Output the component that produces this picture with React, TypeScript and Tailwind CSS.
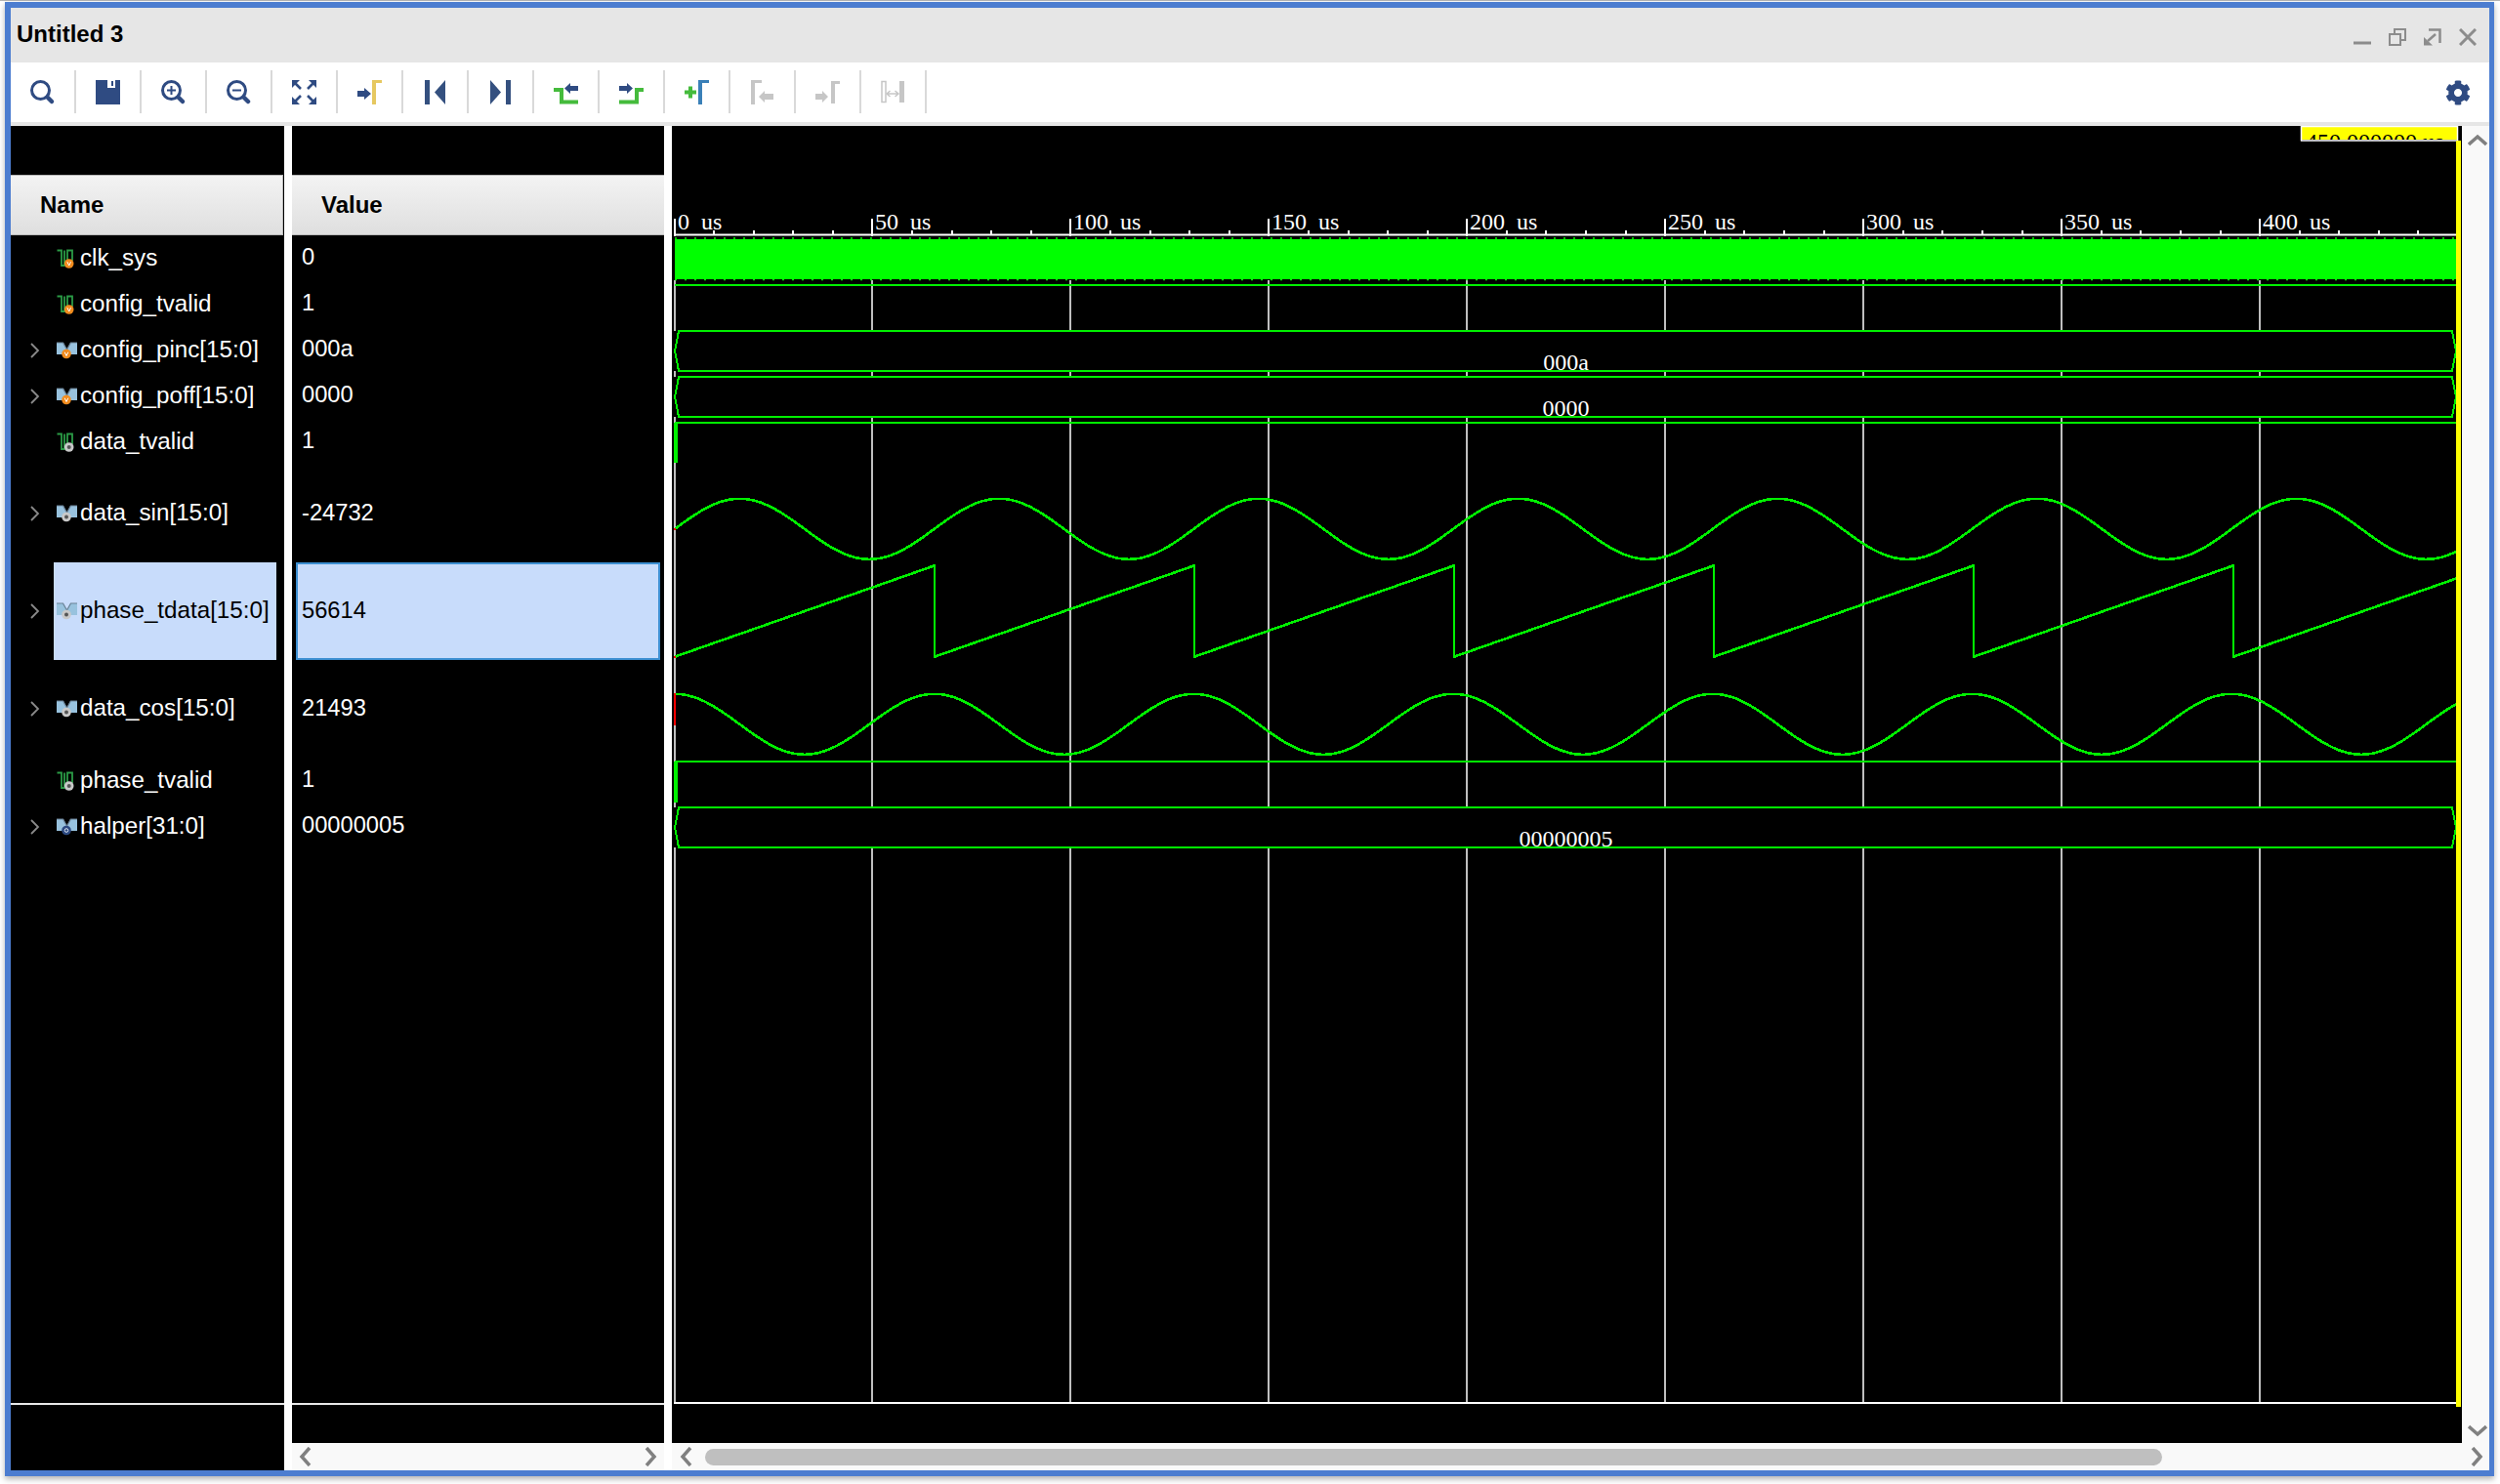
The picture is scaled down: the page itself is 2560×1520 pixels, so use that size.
import type { ReactNode } from "react";
import { FaCog } from "react-icons/fa";

const navy = "#2f4b82";
const green = "#45bb3c";
const off = "#c6c6c6";

type Dot = "v" | "o" | "c";

interface Signal {
  name: string;
  value: string;
  kind: "bit" | "bus";
  dot: Dot;
  h: string;
  selected?: boolean;
}

const signals: Signal[] = [
  { name: "clk_sys", value: "0", kind: "bit", dot: "v", h: "h-[47px]" },
  { name: "config_tvalid", value: "1", kind: "bit", dot: "v", h: "h-[47px]" },
  { name: "config_pinc[15:0]", value: "000a", kind: "bus", dot: "v", h: "h-[47px]" },
  { name: "config_poff[15:0]", value: "0000", kind: "bus", dot: "v", h: "h-[47px]" },
  { name: "data_tvalid", value: "1", kind: "bit", dot: "o", h: "h-[47px]" },
  { name: "data_sin[15:0]", value: "-24732", kind: "bus", dot: "o", h: "h-[100px]" },
  { name: "phase_tdata[15:0]", value: "56614", kind: "bus", dot: "o", h: "h-[100px]", selected: true },
  { name: "data_cos[15:0]", value: "21493", kind: "bus", dot: "o", h: "h-[100px]" },
  { name: "phase_tvalid", value: "1", kind: "bit", dot: "o", h: "h-[47px]" },
  { name: "halper[31:0]", value: "00000005", kind: "bus", dot: "c", h: "h-[47px]" },
];

function Lens({ sign }: { sign?: "+" | "-" }) {
  return (
    <svg width="30" height="30" viewBox="0 0 30 30">
      <circle cx="12.500" cy="13.500" r="9" fill="none" stroke={navy} strokeWidth="3" />
      <path d="M20 21l4 4" stroke={navy} strokeWidth="4.500" strokeLinecap="round" />
      {sign && <path d="M8 13.500h9" stroke={navy} strokeWidth="2" />}
      {sign === "+" && <path d="M12.500 9v9" stroke={navy} strokeWidth="2" />}
    </svg>
  );
}

function Icon({ children }: { children: ReactNode }) {
  return (
    <svg width="30" height="30" viewBox="0 0 30 30">
      {children}
    </svg>
  );
}

const toolbar: ReactNode[] = [
  <Lens key="find" />,
  <Icon key="save">
    <path d="M2 3h25v25H2z" fill={navy} />
    <path d="M14 3h8v8h-8z" fill="#fff" />
    <path d="M18 4h2v5h-2z" fill={navy} />
  </Icon>,
  <Lens key="in" sign="+" />,
  <Lens key="out" sign="-" />,
  <Icon key="fit">
    <g fill={navy}>
      <path d="M2 3h8l-8 8zM27 3h-8l8 8zM2 28h8l-8-8zM27 28h-8l8-8z" />
    </g>
    <path d="M5 6l6 6M24 6l-6 6M5 25l6-6M24 25l-6-6" stroke={navy} strokeWidth="2.600" />
  </Icon>,
  <Icon key="marker">
    <path d="M2 14h7v-3l7 6-7 6v-3H2z" fill={navy} />
    <path d="M17 3h10v3h-6v22h-4z" fill="#e6c860" />
  </Icon>,
  <Icon key="start">
    <path d="M4 3h5v25H4z" fill="#34507f" />
    <path d="M25 3L14 15.500 25 28z" fill="#34507f" />
  </Icon>,
  <Icon key="end">
    <path d="M4 3l11 12.500L4 28z" fill="#34507f" />
    <path d="M20 3h5v25h-5z" fill="#34507f" />
  </Icon>,
  <Icon key="prev">
    <path d="M2 13h8v12.500h17" fill="none" stroke={green} strokeWidth="4" />
    <path d="M13 11.500L19 6v3h8v5h-8v3z" fill={navy} />
  </Icon>,
  <Icon key="next">
    <path d="M2 25.500h18V13h7" fill="none" stroke={green} strokeWidth="4" />
    <path d="M2 9h8V6l6 5.500-6 5.500v-3H2z" fill={navy} />
  </Icon>,
  <Icon key="add">
    <path d="M2 15.500h12M8 9.500v12" stroke={green} strokeWidth="4" />
    <path d="M16 3h11v3h-7v22h-4z" fill="#3a80b8" />
  </Icon>,
  <Icon key="prevm">
    <path d="M3 3h11v3H7v22H3z" fill={off} />
    <path d="M11 20l6-6v3h9v6h-9v3z" fill={off} />
  </Icon>,
  <Icon key="nextm">
    <path d="M2 17h7v-3l6 6-6 6v-3H2z" fill={off} />
    <path d="M18 4h9v3h-5v20h-4z" fill={off} />
  </Icon>,
  <Icon key="swap">
    <path d="M3 4.500h4v21H3z" fill="none" stroke={off} strokeWidth="1.500" />
    <path d="M21 4h5v22h-5z" fill={off} />
    <path d="M8 17h12M11.500 14l-3.500 3 3.500 3M16.500 14l3.500 3-3.500 3" fill="none" stroke={off} strokeWidth="1.500" />
  </Icon>,
];

function Medal({ dot, cx, cy }: { dot: Dot; cx: number; cy: number }) {
  const fill = dot === "v" ? "#f28c1e" : dot === "o" ? "#c9c9c9" : "#2d4a82";
  return (
    <g>
      <circle cx={cx} cy={cy} r="4.800" fill={fill} />
      {dot === "v" && <path d={`M${cx - 1.800} ${cy - 1.800}l1.800 3.800 1.800-3.800`} fill="none" stroke="#fff" strokeWidth="1" />}
      {dot === "o" && <circle cx={cx} cy={cy} r="2" fill="#555" />}
      {dot === "c" && <circle cx={cx} cy={cy} r="1.800" fill="none" stroke="#dfe8f5" strokeWidth="1" />}
    </g>
  );
}

function SignalIcon({ kind, dot }: { kind: "bit" | "bus"; dot: Dot }) {
  if (kind === "bit") {
    return (
      <svg width="20" height="22" viewBox="0 0 20 22" className="shrink-0">
        <path d="M0.500 2.500h4.500v15.500h3V2.500" fill="none" stroke="#2a9a45" strokeWidth="1.800" />
        <path d="M11 13V2.500h5V13" fill="none" stroke="#2a9a45" strokeWidth="1.800" />
        <Medal dot={dot} cx={12.700} cy={16} />
      </svg>
    );
  }
  return (
    <svg width="21" height="22" viewBox="0 0 21 22" className="shrink-0 mr-[-1px]">
      <path d="M0 3h7l3.500 7 3.500-7h7v12H0z" fill="#98c2de" />
      <path d="M0 3h6.500l4 7 4-7H21" fill="none" stroke="#6b8296" strokeWidth="1.200" />
      <Medal dot={dot} cx={10} cy={14.500} />
    </svg>
  );
}

function Chevron({ dir, className }: { dir: "left" | "right" | "up" | "down"; className: string }) {
  const d = {
    left: "M11 1L3 10l8 9",
    right: "M2 1l8 9-8 9",
    up: "M1 11l9-8 9 8",
    down: "M1 2l9 8 9-8",
  }[dir];
  const box = dir === "up" || dir === "down" ? "0 0 20 13" : "0 0 13 20";
  return (
    <svg viewBox={box} className={className}>
      <path d={d} fill="none" stroke="#808080" strokeWidth="3.500" />
    </svg>
  );
}

function NameRow({ s }: { s: Signal }) {
  return (
    <div className={`flex items-center pl-[20px] ${s.h}`}>
      <div className="w-[10px] shrink-0">
        {s.kind === "bus" && (
          <svg width="10" height="16" viewBox="0 0 10 16">
            <path d="M1 1l7 7-7 7" fill="none" stroke="#8a8a8a" strokeWidth="1.800" />
          </svg>
        )}
      </div>
      <div
        className={`ml-[14px] pl-[3px] w-[228px] h-full flex items-center gap-[4px] ${
          s.selected ? "bg-[#c8dcfb] text-black" : "text-white"
        }`}
      >
        <SignalIcon kind={s.kind} dot={s.dot} />
        <span className="whitespace-nowrap text-[24.200px] pb-px">{s.name}</span>
      </div>
    </div>
  );
}

function ValueRow({ s }: { s: Signal }) {
  return (
    <div className={`px-[4px] ${s.h}`}>
      <div
        className={`h-full flex items-center pl-[4px] pb-px text-[23.700px] border-2 ${
          s.selected ? "bg-[#c8dcfb] border-[#3d8fd1] text-black" : "border-transparent text-white"
        }`}
      >
        {s.value}
      </div>
    </div>
  );
}

const X0 = 691;
const XEND = 2515;

const gridX = (i: number) => Math.round(689.5 + 202.95 * i);

function wavePoints(fn: (x: number) => number) {
  const pts: string[] = [];
  for (let x = X0; x <= XEND; x += 2) pts.push(`${x},${fn(x).toFixed(1)}`);
  return pts.join(" ");
}

function sawPath() {
  const T = 266;
  const top = 579.3;
  const low = 672.7;
  let d = `M${X0} ${low}`;
  let x = X0;
  while (x + T < XEND) {
    x += T;
    d += `L${x} ${top}V${low}`;
  }
  const end = low - ((low - top) * (XEND - x)) / T;
  return `${d}L${XEND} ${end.toFixed(1)}`;
}

function busPath(top: number, bottom: number) {
  const mid = (top + bottom) / 2;
  return `M${X0} ${mid}L${X0 + 4} ${top}H${XEND - 4}L${XEND} ${mid}L${XEND - 4} ${bottom}H${X0 + 4}Z`;
}

function Waves() {
  const T = 265.7;
  const lineGreen = "#00f000";
  const majors = Array.from({ length: 9 }, (_, i) => i);
  const minors = Array.from({ length: 45 }, (_, i) => i).filter((i) => i % 5 !== 0);
  const busses = [
    { top: 339, bottom: 380, label: "000a" },
    { top: 386, bottom: 427, label: "0000" },
    { top: 827, bottom: 868, label: "00000005" },
  ];
  return (
    <svg viewBox="688 129 1833 1349" className="w-[1833px] h-[1349px] block bg-black font-['Liberation_Serif',serif]">
      <defs>
        <clipPath id="cursorLabel">
          <rect x="2356" y="129" width="160" height="14" />
        </clipPath>
      </defs>

      {/* grid, then the bus rows that paint over it */}
      {majors.map((i) => (
        <rect key={i} x={gridX(i)} y="287" width="2" height="1150" fill="#bfbfbf" />
      ))}
      <rect x="690" y="339" width="1826" height="41" fill="#000" />
      <rect x="690" y="386" width="1826" height="41" fill="#000" />
      <rect x="690" y="827" width="1826" height="41" fill="#000" />
      <rect x="690" y="1436" width="1825" height="2" fill="#fff" />

      {/* ruler */}
      <rect x="690" y="239.500" width="1825" height="2" fill="#fff" />
      {majors.map((i) => (
        <g key={i}>
          <rect x={gridX(i)} y="224" width="2" height="18" fill="#fff" />
          <text x={gridX(i) + 4} y="235" fontSize="24" fill="#fff" className="whitespace-pre">
            {`${i * 50}  us`}
          </text>
        </g>
      ))}
      {minors.map((i) => (
        <rect key={i} x={Math.round(689.5 + (i * 202.95) / 5)} y="236" width="2" height="4" fill="#fff" />
      ))}

      {/* cursor label, cut off by the top of the pane */}
      <rect x="2356" y="129" width="160" height="14" fill="#ffff00" />
      <text x="2361" y="153" fontSize="24" fill="#000" clipPath="url(#cursorLabel)" className="whitespace-pre">
        450.000000 us
      </text>
      <path d="M2356.500 129v15.500M2356 144h160M2356 129.500h161M2516.500 129v15" stroke="#fff" strokeWidth="1.500" fill="none" />

      {/* clock */}
      <rect x={X0} y="245" width={XEND - X0} height="41" fill="#00ff00" />
      <path d={`M${X0} 244H${XEND}M${X0} 286.500H${XEND}`} stroke="#00ff00" strokeWidth="1.500" strokeDasharray="2 8" />

      <g fill="none" stroke={lineGreen} strokeWidth="2" shapeRendering="crispEdges">
        <path d={`M${X0} 292H${XEND}`} />
        {busses.map((b) => (
          <path key={b.top} d={busPath(b.top, b.bottom)} />
        ))}
        <path d={`M${X0} 433H${XEND}`} />
        <path d={`M${X0} 780H${XEND}`} />
      </g>
      <g fill="none" stroke={lineGreen} strokeWidth="2.600" shapeRendering="crispEdges">
        <polyline points={wavePoints((x) => 541.8 - 31 * Math.sin((2 * Math.PI * (x - X0)) / T))} />
        <path d={sawPath()} />
        <polyline points={wavePoints((x) => 741.8 - 31 * Math.cos((2 * Math.PI * (x - X0)) / T))} />
      </g>
      <rect x="690" y="433" width="4" height="41" fill={lineGreen} />
      <rect x="690" y="780" width="4" height="42" fill={lineGreen} />
      <rect x="690" y="710" width="2" height="33" fill="#ff0000" />
      <rect x="690" y="541" width="2" height="2" fill="#ff0000" />
      <rect x="690" y="672" width="2" height="2" fill="#ff0000" />

      {busses.map((b) => (
        <text key={b.label} x="1603.500" y={b.bottom - 1.500} fontSize="24" fill="#fff" textAnchor="middle">
          {b.label}
        </text>
      ))}

      {/* end-of-time cursor */}
      <rect x="2515" y="144" width="5" height="1297" fill="#ffff00" />
    </svg>
  );
}

export default function App() {
  return (
    <div className="w-[2560px] h-[1520px] bg-white overflow-hidden font-['Liberation_Sans',Arial,sans-serif]">
      <div className="h-px bg-[#b4b4b4]" />
      <div className="mt-px ml-[5px] w-[2549px] h-[1510px] flex flex-col border-x-[6px] border-y-[6px] border-r-[5px] border-[#4c7dd0] shadow-[0_3px_6px_rgba(0,0,0,0.3)]">
        {/* title bar */}
        <div className="h-[56px] shrink-0 bg-[#e6e6e6] flex justify-between pl-[6px] pr-[13px]">
          <span className="self-center pb-[3px] text-[24px] font-bold text-black">Untitled 3</span>
          <div className="flex gap-[18px] mt-[21px]">
            <svg width="18" height="18" viewBox="0 0 18 18">
              <path d="M0 15h18" stroke="#8c8c8c" strokeWidth="3" />
            </svg>
            <svg width="18" height="18" viewBox="0 0 18 18" fill="none" stroke="#8c8c8c" strokeWidth="2">
              <path d="M6 6V1h11v11h-5" />
              <path d="M1 6h11v11H1z" />
            </svg>
            <svg width="18" height="18" viewBox="0 0 18 18" fill="none" stroke="#8c8c8c" strokeWidth="2.500">
              <path d="M5 1.500h11.500V15" />
              <path d="M12 6l-8 7" />
              <path d="M0 17.500V9l9 8.500z" fill="#8c8c8c" stroke="none" />
            </svg>
            <svg width="18" height="18" viewBox="0 0 18 18">
              <path d="M1 1l16 16M17 1L1 17" stroke="#8c8c8c" strokeWidth="3" />
            </svg>
          </div>
        </div>

        {/* toolbar */}
        <div className="h-[61px] shrink-0 bg-white flex items-start pt-[8px]">
          {toolbar.map((icon, i) => (
            <div key={i} className="w-[67px] h-[44px] flex items-center justify-center border-r-2 border-[#d9d9d9]">
              {icon}
            </div>
          ))}
          <div className="ml-auto mr-[19px] mt-[10px] text-[#2f4b82]">
            <FaCog size={26} />
          </div>
        </div>
        <div className="h-[4px] shrink-0 bg-[#e6e6e6]" />

        <div className="flex-1 min-h-0 flex text-[24px] bg-white">
          {/* names */}
          <div className="w-[280px] shrink-0 bg-black flex flex-col">
            <div className="h-[50px] shrink-0" />
            <div className="h-[62px] shrink-0 mr-px flex items-center pl-[30px] font-bold text-[24px] text-black bg-linear-to-b from-[#f3f3f3] to-[#dfdfdf] border-y border-r border-[#b9b9b9]">
              Name
            </div>
            <div className="flex-1 border-b-2 border-[#e8e8e8]">
              {signals.map((s) => (
                <NameRow key={s.name} s={s} />
              ))}
            </div>
            <div className="h-[67px] shrink-0" />
          </div>

          {/* values */}
          <div className="w-[381px] shrink-0 ml-[8px] flex flex-col">
            <div className="flex-1 bg-black flex flex-col">
              <div className="h-[50px] shrink-0" />
              <div className="h-[62px] shrink-0 flex items-center pl-[30px] font-bold text-[24px] text-black bg-linear-to-b from-[#f3f3f3] to-[#dfdfdf] border-y border-[#b9b9b9]">
                Value
              </div>
              <div className="flex-1 border-b-2 border-[#e8e8e8]">
                {signals.map((s) => (
                  <ValueRow key={s.name} s={s} />
                ))}
              </div>
              <div className="h-[39px] shrink-0" />
            </div>
            <div className="h-[28px] shrink-0 bg-[#f9f9f9] flex items-center justify-between px-[7px]">
              <Chevron dir="left" className="w-[13px] h-[20px]" />
              <Chevron dir="right" className="w-[13px] h-[20px]" />
            </div>
          </div>

          {/* waveform */}
          <div className="flex-1 ml-[8px] flex flex-col min-w-0">
            <div className="flex h-[1349px] shrink-0">
              <Waves />
              <div className="flex-1 bg-[#f9f9f9] flex flex-col items-center justify-between pt-[8px] pb-[6px] pl-[6px] pr-[2px]">
                <Chevron dir="up" className="w-[20px] h-[13px]" />
                <Chevron dir="down" className="w-[20px] h-[13px]" />
              </div>
            </div>
            <div className="h-[28px] shrink-0 bg-[#f9f9f9] flex items-center pl-[8px] pr-[6px]">
              <Chevron dir="left" className="w-[13px] h-[20px]" />
              <div className="ml-[13px] w-[1492px] h-[17px] rounded-full bg-[#bfbfbf]" />
              <Chevron dir="right" className="ml-auto w-[13px] h-[20px]" />
            </div>
          </div>
        </div>
      </div>
    </div>
  );
}
